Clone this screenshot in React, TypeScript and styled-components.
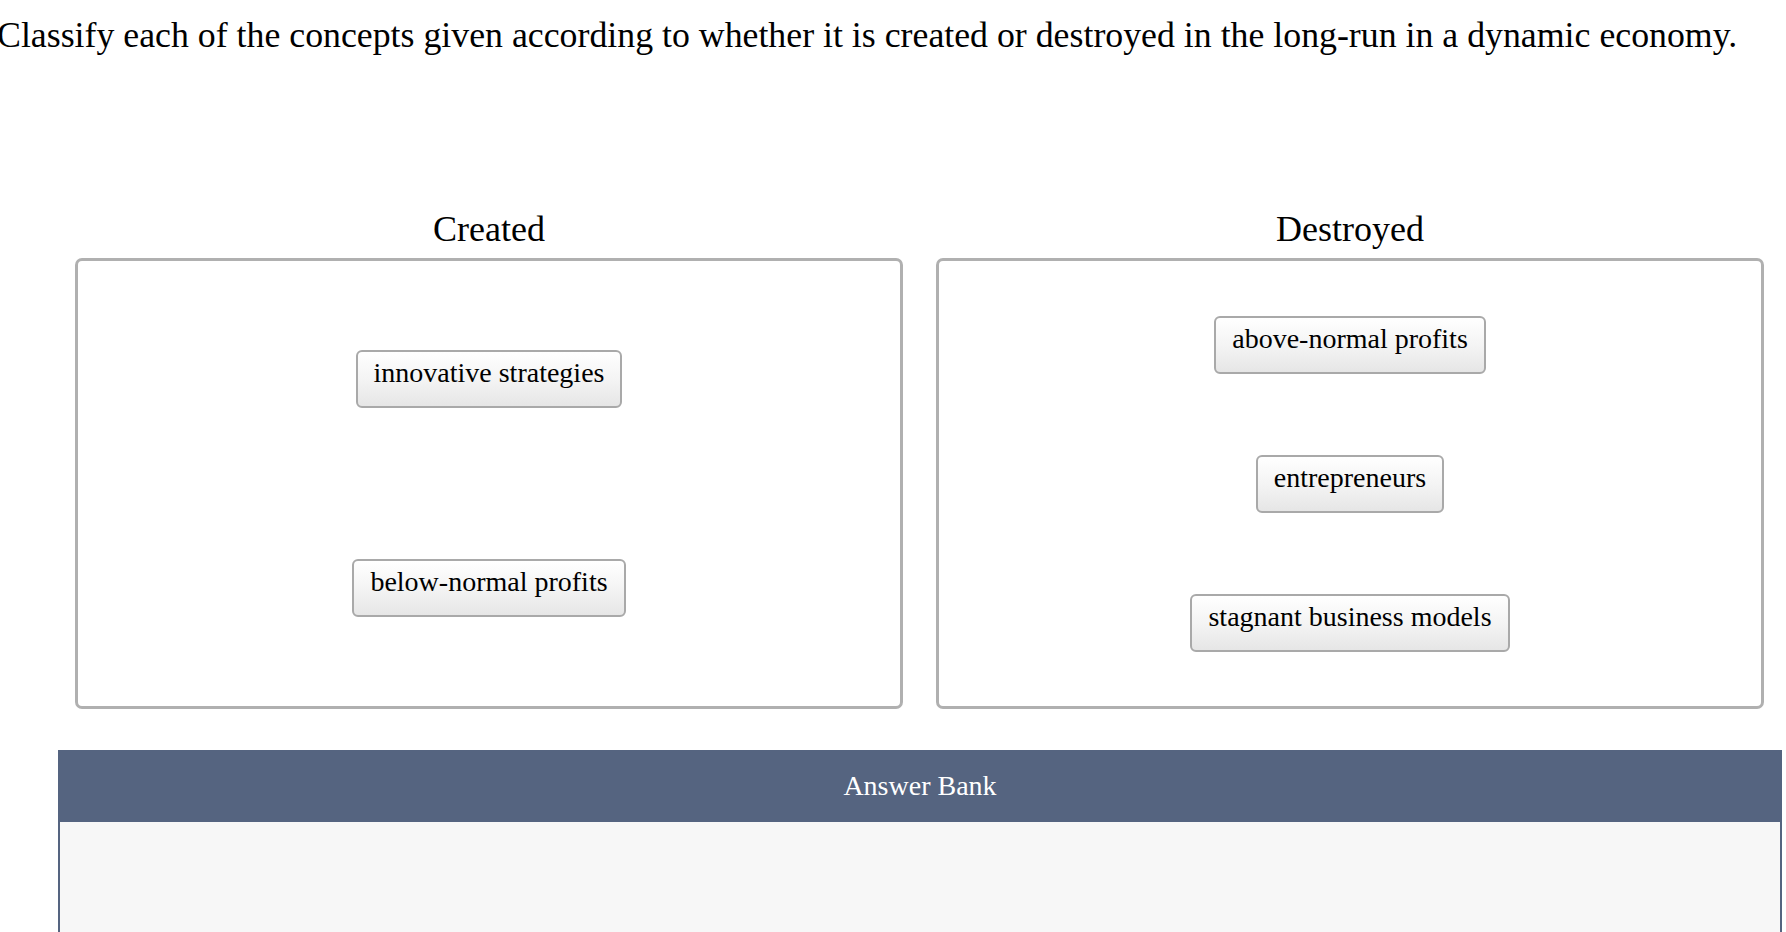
import { createGlobalStyle } from "styled-components";
import styled from "styled-components";

const GlobalStyle = createGlobalStyle`
  html, body {
    margin: 0;
    padding: 0;
    background: #ffffff;
    overflow: hidden;
  }
  body {
    font-family: "Liberation Serif", "Times New Roman", serif;
    color: #000;
  }
`;

const Page = styled.div`
  width: 1786px;
  height: 932px;
  overflow: hidden;
`;

const Prompt = styled.div`
  font-size: 35.8px;
  line-height: 40px;
  padding-top: 15px;
  margin-left: -3px;
  white-space: nowrap;
`;

const Columns = styled.div`
  display: grid;
  grid-template-columns: 828px 828px;
  column-gap: 33px;
  padding: 154px 0 0 75px;
`;

const Column = styled.div`
  display: flex;
  flex-direction: column;
`;

const Heading = styled.div`
  font-size: 36px;
  line-height: 40px;
  text-align: center;
  margin-bottom: 9px;
`;

const DropZone = styled.div`
  box-sizing: border-box;
  height: 451px;
  border: 3px solid #b0b0b0;
  border-radius: 7px;
  padding: 14px 0;
  display: flex;
  flex-direction: column;
  align-items: center;
  justify-content: space-around;
`;

const Chip = styled.div`
  box-sizing: border-box;
  height: 58px;
  padding: 4px 16px 16px;
  border: 2px solid #a9a9a9;
  border-radius: 6px;
  background: linear-gradient(to bottom, #ffffff 0%, #f4f4f4 50%, #e6e6e6 100%);
  font-size: 28px;
  line-height: 33px;
  white-space: nowrap;
`;

const Bank = styled.div`
  margin: 41px 4px 0 58px;
`;

const BankHeader = styled.div`
  height: 72px;
  line-height: 72px;
  background: #556480;
  color: #ffffff;
  font-size: 28px;
  text-align: center;
`;

const BankBody = styled.div`
  height: 200px;
  background: #f7f7f7;
  border-left: 2px solid #556480;
  border-right: 2px solid #556480;
`;

const zones = [
  { title: "Created", items: ["innovative strategies", "below-normal profits"] },
  {
    title: "Destroyed",
    items: ["above-normal profits", "entrepreneurs", "stagnant business models"],
  },
];

export default function App() {
  return (
    <>
      <GlobalStyle />
      <Page>
        <Prompt>
          Classify each of the concepts given according to whether it is created or
          destroyed in the long-run in a dynamic economy.
        </Prompt>

        <Columns>
          {zones.map((z) => (
            <Column key={z.title}>
              <Heading>{z.title}</Heading>
              <DropZone>
                {z.items.map((it) => (
                  <Chip key={it}>{it}</Chip>
                ))}
              </DropZone>
            </Column>
          ))}
        </Columns>

        <Bank>
          <BankHeader>Answer Bank</BankHeader>
          <BankBody />
        </Bank>
      </Page>
    </>
  );
}
